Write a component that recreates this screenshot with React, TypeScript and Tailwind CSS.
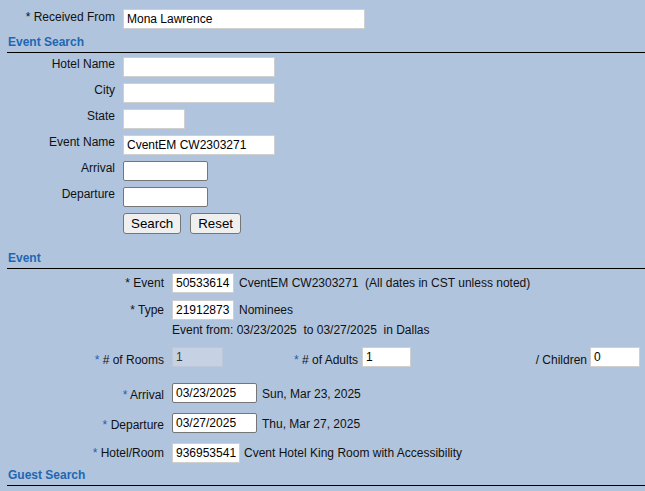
import React from "react";

// Reservation form - received from / event search / event details
const heading = "ml-[7px] mr-0 border-b border-black pb-[3px] pl-[1px] text-[12px] leading-[14px] font-bold text-[#1f67b1]";
const plainInput = "h-[20px] border border-[#cfcfcf] bg-white px-[3px] text-[12px] text-black outline-none";
const dateInput = "h-[20px] rounded-[2px] border border-[#767676] bg-white px-[3px] text-[12px] text-black outline-none";
const button = "h-[21px] rounded-[3px] border border-[#767676] bg-[#efefef] px-[7px] text-[13.33px] leading-[17px] text-black";

function SearchRow({ label, width, date, value }: { label: string; width: string; date?: boolean; value?: string }) {
  return (
    <div className="flex items-start gap-2">
      <div className="w-[115px] text-right leading-[14px]">{label}</div>
      <input className={`${date ? dateInput : plainInput} ${width}`} defaultValue={value} />
    </div>
  );
}

function Req({ blue }: { blue?: boolean }) {
  return <span className={blue ? "text-[#1f5fb0]" : "text-[#111]"}>* </span>;
}

export default function App() {
  return (
    <div className="min-h-screen bg-[#b0c4de] font-['Liberation_Sans',Arial,sans-serif] text-[12px] leading-[14px] text-[#111]">
      {/* received from */}
      <div className="flex items-start gap-2 pt-[9px]">
        <div className="mt-[1px] w-[115px] text-right">
          <Req />Received From
        </div>
        <input className={`${plainInput} w-[242px]`} defaultValue="Mona Lawrence" />
      </div>

      <div className={`${heading} mt-[6px]`}>Event Search</div>

      <div className="mt-[4px] flex flex-col gap-[6px]">
        <SearchRow label="Hotel Name" width="w-[152px]" />
        <SearchRow label="City" width="w-[152px]" />
        <SearchRow label="State" width="w-[62px]" />
        <SearchRow label="Event Name" width="w-[152px]" value="CventEM CW2303271" />
        <SearchRow label="Arrival" width="w-[85px]" date />
        <SearchRow label="Departure" width="w-[85px]" date />
        <div className="flex gap-[9px] pl-[123px]">
          <button className={button}>Search</button>
          <button className={button}>Reset</button>
        </div>
      </div>

      <div className={`${heading} mt-[17px]`}>Event</div>

      <div className="mt-[4px] flex items-center gap-2">
        <div className="w-[164px] text-right">
          <Req />Event
        </div>
        <div className="flex items-center gap-[5px]">
          <input className={`${plainInput} w-[62px]`} defaultValue="50533614" />
          <span className="whitespace-pre">CventEM CW2303271  (All dates in CST unless noted)</span>
        </div>
      </div>

      <div className="mt-[7px] flex items-center gap-2">
        <div className="w-[164px] text-right">
          <Req />Type
        </div>
        <div className="flex items-center gap-[5px]">
          <input className={`${plainInput} w-[62px]`} defaultValue="219128731" />
          <span>Nominees</span>
        </div>
      </div>

      <div className="mt-[3px] whitespace-pre pl-[172px]">
        Event from: 03/23/2025  to 03/27/2025  in Dallas
      </div>

      <div className="mt-[10px] flex items-end pr-[5px]">
        <div className="w-[164px] text-right">
          <Req blue /># of Rooms
        </div>
        <input
          className="ml-2 h-[20px] w-[51px] border border-[#bcc8da] bg-[#c6d2e4] px-[3px] text-[12px] text-[#333] outline-none"
          defaultValue="1"
          disabled
        />
        <div className="w-[135px] text-right">
          <Req blue /># of Adults
        </div>
        <input className={`${plainInput} ml-1 w-[49px]`} defaultValue="1" />
        <div className="flex-1 text-right">/ Children</div>
        <input className={`${plainInput} ml-[3px] w-[50px]`} defaultValue="0" />
      </div>

      <div className="mt-[16px] flex items-center gap-2">
        <div className="mt-[4px] w-[164px] text-right">
          <Req blue />Arrival
        </div>
        <div className="flex items-center gap-[5px]">
          <input className={`${dateInput} w-[85px]`} defaultValue="03/23/2025" />
          <span className="mt-[2px]">Sun, Mar 23, 2025</span>
        </div>
      </div>

      <div className="mt-[10px] flex items-center gap-2">
        <div className="mt-[4px] w-[164px] text-right">
          <Req blue />Departure
        </div>
        <div className="flex items-center gap-[5px]">
          <input className={`${dateInput} w-[85px]`} defaultValue="03/27/2025" />
          <span className="mt-[2px]">Thu, Mar 27, 2025</span>
        </div>
      </div>

      <div className="mt-[10px] flex items-center gap-2">
        <div className="w-[164px] text-right">
          <Req blue />Hotel/Room
        </div>
        <div className="flex items-center gap-[4px]">
          <input className={`${plainInput} w-[68px]`} defaultValue="936953541" />
          <span>Cvent Hotel King Room with Accessibility</span>
        </div>
      </div>

      <div className={`${heading} mt-[5px]`}>Guest Search</div>
    </div>
  );
}
